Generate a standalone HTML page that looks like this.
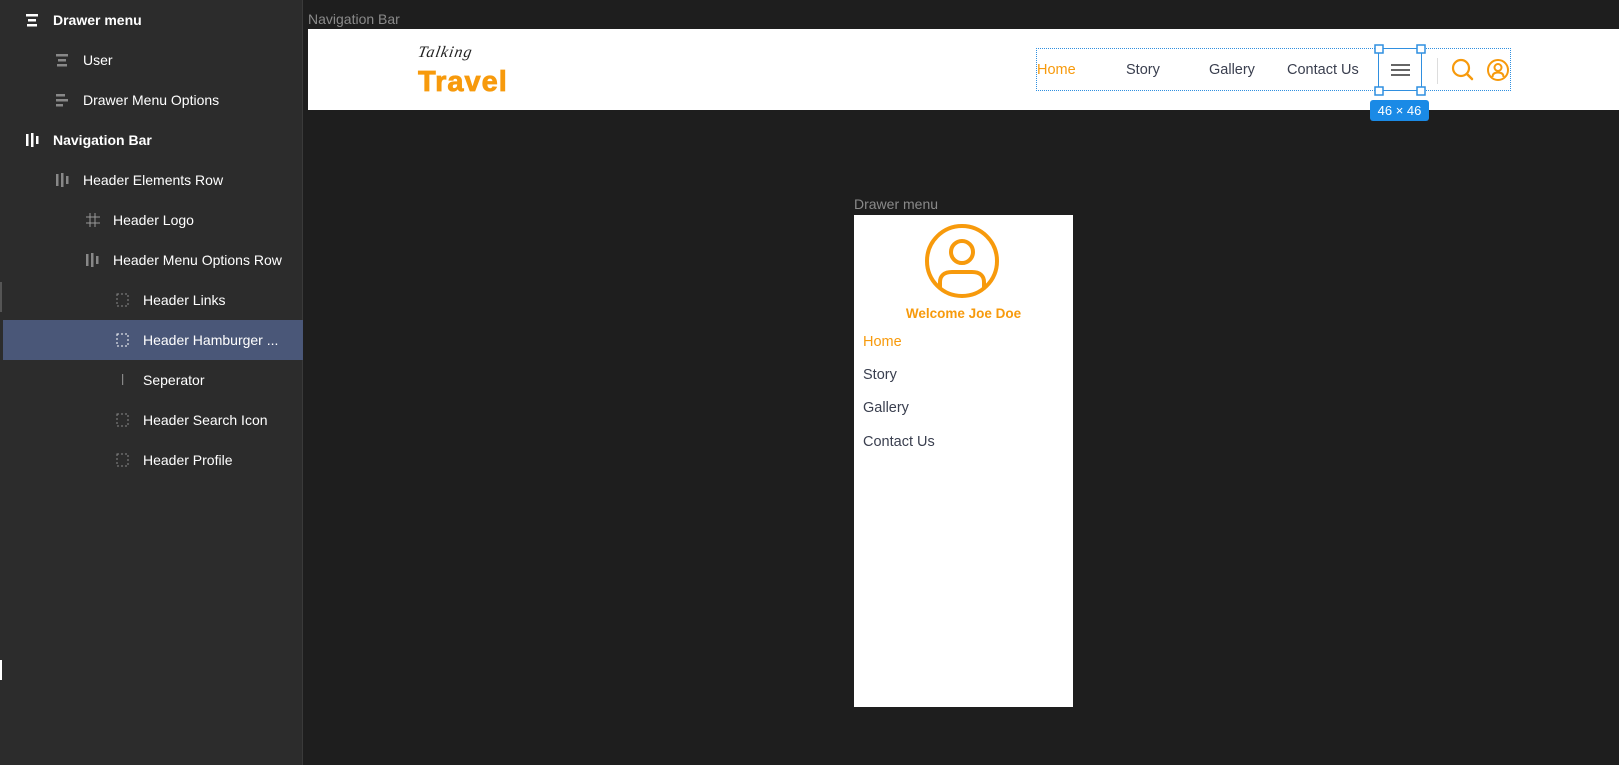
<!DOCTYPE html>
<html><head><meta charset="utf-8"><style>
*{margin:0;padding:0;box-sizing:border-box}
body{width:1619px;height:765px;background:#1e1e1e;position:relative;overflow:hidden;font-family:"Liberation Sans",sans-serif}
.side{position:absolute;left:0;top:0;width:303px;height:765px;background:#2c2c2c;border-right:1px solid #3a3a3a}
.row{position:absolute;left:0;width:303px;height:40px;color:#fff;font-size:14px;line-height:40px}
.row .ic{position:absolute;top:0;width:16px;height:40px}
.row span{position:absolute}
.sel{background:#4a5778;left:3px;width:300px}
.abs{position:absolute}
.lbl{color:#8a8a8a;font-size:14px}
.nav{position:absolute;left:308px;top:29px;width:1311px;height:81px;background:#fff}
.link{position:absolute;top:62px;font-size:14.5px;color:#3a3f4f}
.dm{position:absolute;left:863px;font-size:14.5px;color:#3a3f4f;font-family:"Liberation Sans",sans-serif}
</style></head><body>
<div class="side">
 <div class="row" style="top:0"><svg class="ic" style="left:25px" viewBox="0 0 16 40"><g fill="#fff"><rect x="1" y="14" width="12" height="2.5"/><rect x="3" y="19" width="8" height="2.5"/><rect x="2" y="24" width="10" height="2.5"/></g></svg><span style="left:53px;font-weight:bold">Drawer menu</span></div>
 <div class="row" style="top:40px"><svg class="ic" style="left:55px" viewBox="0 0 16 40"><g fill="#888"><rect x="1" y="14" width="12" height="2.5"/><rect x="3" y="19" width="8" height="2.5"/><rect x="2" y="24" width="10" height="2.5"/></g></svg><span style="left:83px">User</span></div>
 <div class="row" style="top:80px"><svg class="ic" style="left:55px" viewBox="0 0 16 40"><g fill="#888"><rect x="1" y="14" width="9" height="2.5"/><rect x="1" y="19" width="12" height="2.5"/><rect x="1" y="24" width="7" height="2.5"/></g></svg><span style="left:83px">Drawer Menu Options</span></div>
 <div class="row" style="top:120px"><svg class="ic" style="left:25px" viewBox="0 0 16 40"><g fill="#fff"><rect x="1" y="14" width="2.5" height="12"/><rect x="6" y="13" width="2.5" height="14"/><rect x="11" y="16" width="2.5" height="8"/></g></svg><span style="left:53px;font-weight:bold">Navigation Bar</span></div>
 <div class="row" style="top:160px"><svg class="ic" style="left:55px" viewBox="0 0 16 40"><g fill="#888"><rect x="1" y="14" width="2.5" height="12"/><rect x="6" y="13" width="2.5" height="14"/><rect x="11" y="16" width="2.5" height="8"/></g></svg><span style="left:83px">Header Elements Row</span></div>
 <div class="row" style="top:200px"><svg class="ic" style="left:85px" viewBox="0 0 16 40"><g stroke="#999" stroke-width="1"><path d="M5 13v14M10 13v14M1 17h14M1 23h14"/></g></svg><span style="left:113px">Header Logo</span></div>
 <div class="row" style="top:240px"><svg class="ic" style="left:85px" viewBox="0 0 16 40"><g fill="#888"><rect x="1" y="14" width="2.5" height="12"/><rect x="6" y="13" width="2.5" height="14"/><rect x="11" y="16" width="2.5" height="8"/></g></svg><span style="left:113px">Header Menu Options Row</span></div>
 <div class="row" style="top:280px"><svg class="ic" style="left:115px" viewBox="0 0 16 40"><rect x="2" y="14" width="11" height="12" fill="none" stroke="#888" stroke-dasharray="2 2"/></svg><span style="left:143px">Header Links</span></div>
 <div class="row sel" style="top:320px"><svg class="ic" style="left:112px" viewBox="0 0 16 40"><rect x="2" y="14" width="11" height="12" fill="none" stroke="#fff" stroke-dasharray="2 2"/></svg><span style="left:140px">Header Hamburger ...</span></div>
 <div class="row" style="top:360px"><svg class="ic" style="left:115px" viewBox="0 0 16 40"><rect x="7" y="14" width="1.2" height="11" fill="#888"/></svg><span style="left:143px">Seperator</span></div>
 <div class="row" style="top:400px"><svg class="ic" style="left:115px" viewBox="0 0 16 40"><rect x="2" y="14" width="11" height="12" fill="none" stroke="#888" stroke-dasharray="2 2"/></svg><span style="left:143px">Header Search Icon</span></div>
 <div class="row" style="top:440px"><svg class="ic" style="left:115px" viewBox="0 0 16 40"><rect x="2" y="14" width="11" height="12" fill="none" stroke="#888" stroke-dasharray="2 2"/></svg><span style="left:143px">Header Profile</span></div>
</div>
<div class="abs" style="left:0;top:282px;width:2px;height:30px;background:#555"></div>
<div class="abs" style="left:0;top:660px;width:2px;height:20px;background:#fff"></div>

<div class="abs lbl" style="left:308px;top:11px">Navigation Bar</div>
<div class="nav"></div>
<div class="abs" style="left:418px;top:44px;font-family:'Liberation Serif',serif;font-style:italic;font-size:16px;color:#222;letter-spacing:1px;transform:skewX(-10deg)">Talking</div>
<div class="abs" style="left:418px;top:66px;font-weight:bold;font-size:29px;color:#f79a0c;line-height:32px;letter-spacing:1px;-webkit-text-stroke:0.8px #f79a0c">Travel</div>
<div class="abs" style="left:1036px;top:48px;width:475px;height:43px;border:1.5px dotted #2f8fe0"></div>
<div class="link" style="left:1037px;color:#f79a0c">Home</div>
<div class="link" style="left:1126px">Story</div>
<div class="link" style="left:1209px">Gallery</div>
<div class="link" style="left:1287px">Contact Us</div>
<div class="abs" style="left:1378px;top:48px;width:44px;height:43px;border:1.5px solid #2f8fe0"></div>
<svg class="abs" style="left:1374px;top:44px" width="52" height="52"><g fill="#fff" stroke="#2f8fe0" stroke-width="1.5"><rect x="1" y="1" width="8" height="8"/><rect x="43" y="1" width="8" height="8"/><rect x="1" y="43" width="8" height="8"/><rect x="43" y="43" width="8" height="8"/></g><g stroke="#333" stroke-width="1.5"><path d="M17 21h19M17 26h19M17 31h19"/></g></svg>
<div class="abs" style="left:1370px;top:100px;width:59px;height:21px;background:#1a8ae6;border-radius:3px;color:#fff;font-size:13px;line-height:21px;text-align:center">46 × 46</div>
<div class="abs" style="left:1437px;top:58px;width:1px;height:26px;background:#ddd"></div>
<svg class="abs" style="left:1450px;top:57px" width="26" height="26"><circle cx="11" cy="11" r="8" fill="none" stroke="#f79a0c" stroke-width="2.2"/><path d="M17 17l5 5" stroke="#f79a0c" stroke-width="2.5" stroke-linecap="round"/></svg>
<svg class="abs" style="left:1486px;top:58px" width="24" height="24"><circle cx="12" cy="12" r="10" fill="none" stroke="#f79a0c" stroke-width="2"/><circle cx="12" cy="9.5" r="3.5" fill="none" stroke="#f79a0c" stroke-width="2"/><path d="M6.5 19c0-3 2-4.5 5.5-4.5s5.5 1.5 5.5 4.5" fill="none" stroke="#f79a0c" stroke-width="2"/></svg>

<div class="abs lbl" style="left:854px;top:196px">Drawer menu</div>
<div class="abs" style="left:854px;top:215px;width:219px;height:492px;background:#fff"></div>
<svg class="abs" style="left:923px;top:222px" width="78" height="78"><circle cx="39" cy="39" r="35" fill="none" stroke="#f79a0c" stroke-width="4"/><circle cx="39" cy="30" r="11" fill="none" stroke="#f79a0c" stroke-width="4"/><path d="M17 66v-6c0-6 4-10 12-10h20c8 0 12 4 12 10v6" fill="none" stroke="#f79a0c" stroke-width="4"/></svg>
<div class="abs" style="left:854px;width:219px;top:306px;text-align:center;color:#f79a0c;font-weight:bold;font-size:13.5px">Welcome Joe Doe</div>
<div class="dm" style="top:334px;color:#f79a0c">Home</div>
<div class="dm" style="top:367px">Story</div>
<div class="dm" style="top:400px">Gallery</div>
<div class="dm" style="top:434px">Contact Us</div>
</body></html>
